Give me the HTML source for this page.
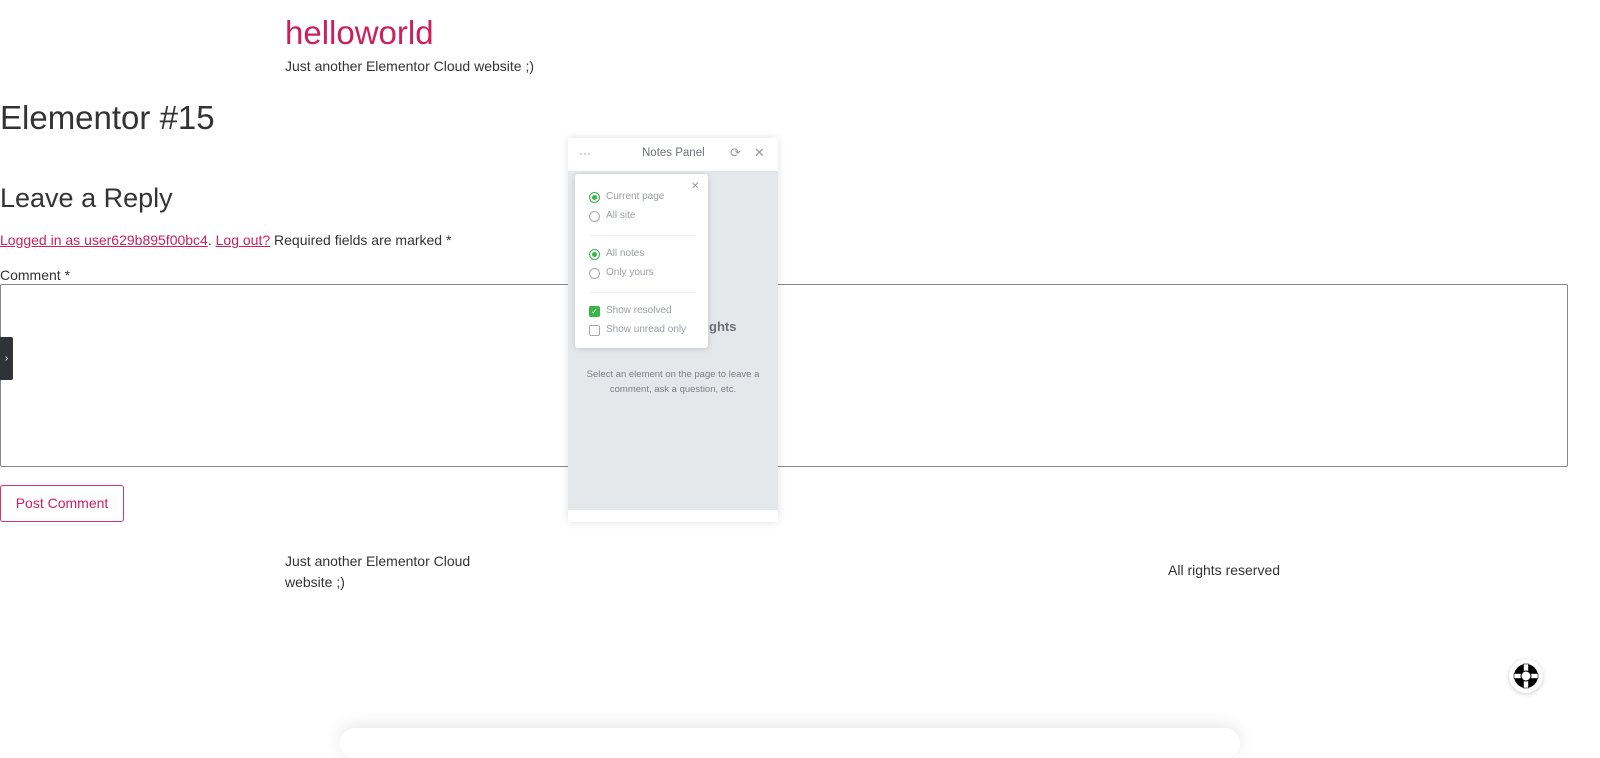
<!DOCTYPE html>
<html><head><meta charset="utf-8"><style>
*{box-sizing:border-box;margin:0;padding:0}
body{width:1600px;height:731px;background:#fff;font-family:"Liberation Sans",sans-serif;color:#333;position:relative;overflow:hidden}
.a{position:absolute;white-space:nowrap}
.r{position:absolute;width:11px;height:11px;border:1px solid #aaa;border-radius:50%}
.r.on{border-color:#39b54a}
.r.on:after{content:"";position:absolute;left:2px;top:2px;width:5px;height:5px;border-radius:50%;background:#39b54a}
.lbl{position:absolute;font-size:10px;color:#9a9ea5}
</style></head><body>
<div class="a" style="left:285px;top:14px;font-size:33px;color:#cc1f5d">helloworld</div>
<div class="a" style="left:285px;top:58px;font-size:14px">Just another Elementor Cloud website ;)</div>
<div class="a" style="left:0;top:99px;font-size:33px">Elementor #15</div>
<div class="a" style="left:0;top:183px;font-size:27px">Leave a Reply</div>
<div class="a" style="left:0;top:232px;font-size:14px"><span style="color:#cc1f5d;text-decoration:underline">Logged in as user629b895f00bc4</span>. <span style="color:#cc1f5d;text-decoration:underline">Log out?</span> Required fields are marked *</div>
<div class="a" style="left:0;top:267px;font-size:14px">Comment *</div>
<div class="a" style="left:0;top:284px;width:1568px;height:183px;border:1px solid #888;border-radius:2px"></div>
<div class="a" style="left:0;top:337px;width:13px;height:43px;background:#2f3338;border-radius:0 2px 2px 0;color:#fff;font-size:10px;line-height:43px;text-align:center">›</div>
<div class="a" style="left:0;top:485px;width:124px;height:37px;border:1px solid #d5336b;border-radius:3px;color:#cc1f5d;font-size:14px;line-height:35px;text-align:center">Post Comment</div>
<div class="a" style="left:285px;top:551px;font-size:14px;line-height:21px">Just another Elementor Cloud<br>website ;)</div>
<div class="a" style="left:1168px;top:562px;font-size:14px">All rights reserved</div>
<div class="a" style="left:1509px;top:659px;width:34px;height:34px;border-radius:50%;background:#fff;box-shadow:0 1px 5px rgba(0,0,0,.2)">
<svg width="34" height="34" viewBox="0 0 34 34"><circle cx="17" cy="17" r="12" fill="#000"/><rect x="14.5" y="5" width="5" height="24" fill="#fff" stroke="#000" stroke-width=".6"/><rect x="5" y="14.5" width="24" height="5" fill="#fff" stroke="#000" stroke-width=".6"/><circle cx="17" cy="17" r="5" fill="#fff" stroke="#000"/></svg></div>
<div class="a" style="left:340px;top:728px;width:900px;height:30px;border-radius:20px;box-shadow:0 -3px 16px rgba(0,0,0,.1)"></div>
<!-- notes panel -->
<div class="a" style="left:568px;top:138px;width:210px;height:384px;background:#fff;box-shadow:0 0 8px rgba(0,0,0,.12)">
<div class="a" style="left:11px;top:8px;font-size:12px;color:#999">···</div>
<div class="a" style="left:74px;top:9px;font-size:11.5px;color:#6d7278">Notes Panel</div>
<div class="a" style="left:162px;top:7px;font-size:13px;color:#999">⟳</div>
<div class="a" style="left:186px;top:7px;font-size:13px;color:#999">✕</div>
<div class="a" style="left:0;top:33px;width:210px;height:339px;background:#e5e8eb"></div>
<div class="a" style="left:141px;top:181px;font-size:13px;font-weight:bold;color:#6d7278">ghts</div>
<div class="a" style="left:0;top:229px;width:210px;text-align:center;font-size:9.5px;color:#7a7f85;line-height:15px;white-space:normal">Select an element on the page to leave a<br>comment, ask a question, etc.</div>
</div>
<div class="a" style="left:575px;top:174px;width:133px;height:174px;background:#fff;border-radius:3px;box-shadow:0 1px 6px rgba(0,0,0,.15)">
<div class="a" style="left:116px;top:7px;font-size:10px;color:#999">✕</div>
<div class="r on" style="left:14px;top:18px"></div><div class="lbl" style="left:31px;top:17px">Current page</div>
<div class="r" style="left:14px;top:37px"></div><div class="lbl" style="left:31px;top:36px">All site</div>
<div class="a" style="left:14px;top:61px;width:107px;height:1px;background:#eee"></div>
<div class="r on" style="left:14px;top:75px"></div><div class="lbl" style="left:31px;top:74px">All notes</div>
<div class="r" style="left:14px;top:94px"></div><div class="lbl" style="left:31px;top:93px">Only yours</div>
<div class="a" style="left:14px;top:118px;width:107px;height:1px;background:#eee"></div>
<div class="a" style="left:14px;top:132px;width:11px;height:11px;background:#39b54a;border-radius:2px;color:#fff;font-size:8px;line-height:11px;text-align:center">✓</div><div class="lbl" style="left:31px;top:131px">Show resolved</div>
<div class="a" style="left:14px;top:151px;width:11px;height:11px;border:1px solid #aaa;border-radius:2px"></div><div class="lbl" style="left:31px;top:150px">Show unread only</div>
</div>
</body></html>
